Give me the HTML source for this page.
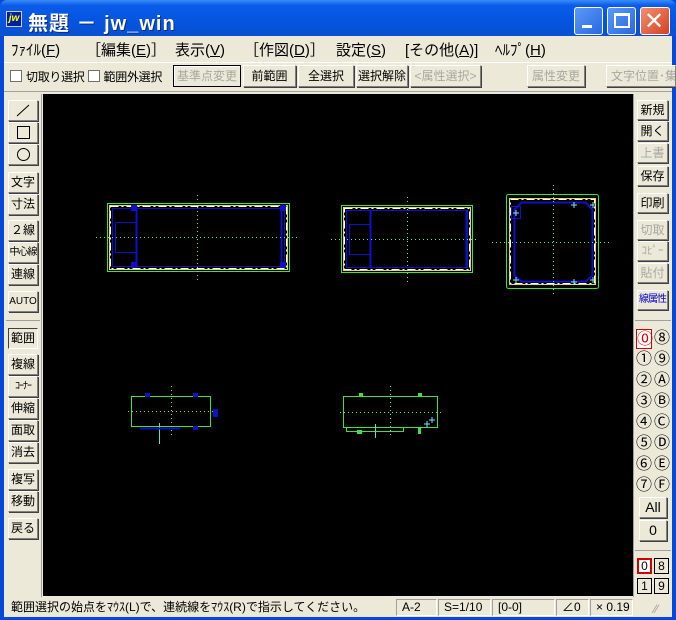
<!DOCTYPE html>
<html><head><meta charset="utf-8"><style>
*{margin:0;padding:0;box-sizing:border-box}
body{width:676px;height:620px;overflow:hidden;background:#0848d8;font-family:"Liberation Sans","Noto Sans CJK JP",sans-serif;position:relative}
.a{position:absolute}
#title{left:0;top:0;width:676px;height:36px;background:linear-gradient(#3a8cf8 0%,#0a5ce8 15%,#0554e0 60%,#0a50d0 100%);border-radius:7px 7px 0 0}
#frame{left:4px;top:36px;width:668px;height:581px;background:#ece9d8}
.btn{position:absolute;background:#ece9d8;border:1px solid;border-color:#fff #808080 #808080 #fff;box-shadow:1px 1px 0 #404040;font-size:12px;text-align:center;color:#000;white-space:nowrap;overflow:hidden}
.dis{color:#a8a8a0}
.wb{position:absolute;top:7px;width:29px;height:28px;border:1px solid #fff;border-radius:3px;background:linear-gradient(135deg,#5a9af8,#2a68e0)}
.sf{position:absolute;top:599px;height:17px;border:1px solid;border-color:#a0a0a0 #fff #fff #a0a0a0;font-size:12px;line-height:15px;padding-left:5px}
.cb{display:inline-block;width:12px;height:12px;border:1px solid #707070;background:#fff;vertical-align:-1px;margin-right:4px}
.m{position:absolute;top:39px;font-size:15px;white-space:pre;color:#000}
.ly{position:absolute;width:16px;height:20px;font-size:16px;line-height:20px;text-align:center;color:#000}
</style></head><body>
<div id="title" class="a"></div>
<div class="a" style="left:6px;top:11px;width:16px;height:16px;background:#0020a0;border:1px solid #ccc;color:#ff0;font:bold italic 10px 'Liberation Sans';line-height:14px;text-align:center">jw</div>
<div class="a" style="left:28px;top:7px;color:#fff;font-size:20px;font-weight:bold;text-shadow:1px 1px 0 #0a2a80;letter-spacing:1px">無題 － jw_win</div>
<div class="wb" style="left:574px"><div class="a" style="left:7px;top:17px;width:10px;height:3px;background:#fff"></div></div>
<div class="wb" style="left:607px"><div class="a" style="left:6px;top:5px;width:16px;height:15px;border:2px solid #fff;border-top-width:3px"></div></div>
<div class="wb" style="left:640px;width:30px;background:linear-gradient(135deg,#f09070,#d84020)"><div class="a" style="left:3px;top:-1px;color:#fff;font:bold 24px 'DejaVu Sans'">✕</div></div>
<div id="frame" class="a"></div>
<div class="m" style="left:11px">ﾌｧｲﾙ(<u>F</u>)</div>
<div class="m" style="left:86px">［編集(<u>E</u>)］</div>
<div class="m" style="left:175px">表示(<u>V</u>)</div>
<div class="m" style="left:244px">［作図(<u>D</u>)］</div>
<div class="m" style="left:336px">設定(<u>S</u>)</div>
<div class="m" style="left:405px">[その他(<u>A</u>)]</div>
<div class="m" style="left:495px">ﾍﾙﾌﾟ(<u>H</u>)</div>
<div class="a" style="left:4px;top:62px;width:668px;height:1px;background:#fff"></div>
<div class="a" style="left:10px;top:68px;font-size:12px;white-space:pre;letter-spacing:-0.3px"><span class="cb"></span>切取り選択 <span class="cb"></span>範囲外選択</div>
<div class="btn dis" style="left:173px;top:65px;width:68px;height:22px;line-height:20px;border:1px solid #000;box-shadow:inset 1px 1px 0 #fff">基準点変更</div>
<div class="btn" style="left:243px;top:65px;width:53px;height:22px;line-height:20px">前範囲</div>
<div class="btn" style="left:298px;top:65px;width:56px;height:22px;line-height:20px">全選択</div>
<div class="btn" style="left:356px;top:65px;width:52px;height:22px;line-height:20px">選択解除</div>
<div class="btn dis" style="left:410px;top:65px;width:71px;height:22px;line-height:20px">&lt;属性選択&gt;</div>
<div class="btn dis" style="left:527px;top:65px;width:58px;height:22px;line-height:20px">属性変更</div>
<div class="btn dis" style="left:606px;top:65px;width:70px;height:22px;line-height:20px;text-align:left;padding-left:4px">文字位置･集</div>
<div class="a" style="left:4px;top:91px;width:668px;height:1px;background:#a0a0a0"></div>
<div class="a" style="left:41px;top:94px;width:1px;height:503px;background:#a0a0a0"></div>
<svg class="a" style="left:43px;top:94px" width="590" height="502" viewBox="43 94 590 502">
<rect x="43" y="94" width="590" height="502" fill="#000"/>
<g fill="none" stroke-width="1">
<rect x="107.5" y="203.5" width="182" height="68" stroke="#40e040"/>
<rect x="109.5" y="205.5" width="178" height="64" stroke="#e0e040"/>
<rect x="110.5" y="206.5" width="176" height="62" stroke="#fff" stroke-dasharray="8,3,2,3"/>
<rect x="112.5" y="208.5" width="172" height="58" stroke="#1010c8"/>
<line x1="136.5" y1="208" x2="136.5" y2="267" stroke="#1010c8" stroke-width="2"/>
<line x1="281.5" y1="208" x2="281.5" y2="267" stroke="#1010c8" stroke-width="2"/>
<rect x="115.5" y="222.5" width="21" height="30" stroke="#1010c8"/>
<line x1="197.5" y1="195" x2="197.5" y2="280" stroke="#60e0c0" stroke-dasharray="1,3"/>
<line x1="96" y1="237.5" x2="300" y2="237.5" stroke="#60e0c0" stroke-dasharray="1,3"/>
<rect x="341.5" y="205.5" width="131" height="67" stroke="#40e040"/>
<rect x="343.5" y="207.5" width="127" height="63" stroke="#e0e040"/>
<rect x="344.5" y="208.5" width="125" height="61" stroke="#fff" stroke-dasharray="8,3,2,3"/>
<rect x="346.5" y="210.5" width="121" height="57" stroke="#1010c8"/>
<line x1="370.5" y1="210" x2="370.5" y2="268" stroke="#1010c8" stroke-width="2"/>
<line x1="466.5" y1="210" x2="466.5" y2="268" stroke="#1010c8" stroke-width="2"/>
<rect x="349.5" y="224.5" width="21" height="30" stroke="#1010c8"/>
<line x1="407.5" y1="197" x2="407.5" y2="282" stroke="#60e0c0" stroke-dasharray="1,3"/>
<line x1="331" y1="239.5" x2="478" y2="239.5" stroke="#60e0c0" stroke-dasharray="1,3"/>
<rect x="506.5" y="194.5" width="92" height="94" rx="2" stroke="#40e040"/>
<rect x="509.5" y="198.5" width="86" height="86" stroke="#e0e040"/>
<rect x="510.5" y="199.5" width="84" height="84" stroke="#fff" stroke-dasharray="8,3,2,3"/>
<path d="M521.5 202.5H585.5L592.5 209.5V275.5L585.5 281.5H521.5L514.5 275.5V209.5Z" stroke="#1010c8" stroke-width="2"/>
<rect x="511.5" y="206.5" width="9" height="12" stroke="#1010c8"/>
<line x1="553.5" y1="185" x2="553.5" y2="295" stroke="#60e0c0" stroke-dasharray="1,3"/>
<line x1="492" y1="242.5" x2="612" y2="242.5" stroke="#60e0c0" stroke-dasharray="1,3"/>
<rect x="131.5" y="396.5" width="79" height="30" stroke="#40e040"/>
<line x1="171.5" y1="386" x2="171.5" y2="438" stroke="#60e0c0" stroke-dasharray="1,3"/>
<line x1="128" y1="411.5" x2="218" y2="411.5" stroke="#60e0c0" stroke-dasharray="1,3"/>
<line x1="159.5" y1="423" x2="159.5" y2="444" stroke="#60e0c0"/>
<line x1="140" y1="428.5" x2="180" y2="428.5" stroke="#1010c8" stroke-width="2"/>
<rect x="343.5" y="396.5" width="94" height="31" stroke="#40e040"/>
<path d="M346.5 428V431.5H403.5V428" stroke="#40e040"/>
<line x1="390.5" y1="386" x2="390.5" y2="436" stroke="#60e0c0" stroke-dasharray="1,3"/>
<line x1="340" y1="412.5" x2="442" y2="412.5" stroke="#60e0c0" stroke-dasharray="1,3"/>
<line x1="375.5" y1="424" x2="375.5" y2="438" stroke="#60e0c0"/>
</g>
<g fill="#1010c8"><rect x="145" y="393" width="5" height="4"/><rect x="193" y="393" width="5" height="4"/><rect x="193" y="426" width="5" height="4"/><rect x="213" y="409" width="5" height="8"/>
<rect x="131" y="205" width="6" height="6"/><rect x="131" y="262" width="6" height="6"/><rect x="280" y="205" width="6" height="6"/><rect x="280" y="262" width="6" height="6"/></g>
<g fill="#40e040"><rect x="359" y="393" width="4" height="4"/><rect x="418" y="393" width="4" height="4"/><rect x="357" y="430" width="5" height="4"/><rect x="418" y="428" width="3" height="6"/></g>
<g stroke="#80e0ff" stroke-width="1"><path d="M424 424h6M427 421v6M429 420h6M432 417v6"/><path d="M513 213h6M516 210v6M571 205h6M574 202v6M590 205h6M593 202v6M513 280h6M516 277v6M571 282h6M574 279v6M590 280h6M593 277v6"/></g>
</svg>
<div class="a" style="left:633px;top:94px;width:1px;height:503px;background:#a0a0a0"></div>
<div class="btn" style="left:8px;top:100px;width:30px;height:21px"><svg width="28" height="19"><line x1="8" y1="15" x2="20" y2="4" stroke="#000"/></svg></div>
<div class="btn" style="left:8px;top:122px;width:30px;height:21px"><div class="a" style="left:8px;top:3px;width:13px;height:13px;border:1px solid #000"></div></div>
<div class="btn" style="left:8px;top:144px;width:30px;height:21px"><div class="a" style="left:8px;top:3px;width:13px;height:13px;border:1px solid #000;border-radius:50%"></div></div>
<div class="btn" style="left:8px;top:172px;width:30px;height:21px;line-height:19px">文字</div>
<div class="btn" style="left:8px;top:194px;width:30px;height:21px;line-height:19px">寸法</div>
<div class="btn" style="left:8px;top:220px;width:30px;height:21px;line-height:19px">２線</div>
<div class="btn" style="left:8px;top:242px;width:30px;height:21px;line-height:19px;font-size:10px;letter-spacing:-1px">中心線</div>
<div class="btn" style="left:8px;top:264px;width:30px;height:21px;line-height:19px">連線</div>
<div class="btn" style="left:8px;top:291px;width:30px;height:21px;line-height:19px;font-size:10px">AUTO</div>
<div class="a" style="left:6px;top:320px;width:34px;height:1px;background:#a0a0a0"></div>
<div class="btn" style="left:8px;top:328px;width:30px;height:21px;line-height:19px;border-color:#404040 #fff #fff #404040;box-shadow:none">範囲</div>
<div class="btn" style="left:8px;top:354px;width:30px;height:21px;line-height:19px">複線</div>
<div class="btn" style="left:8px;top:376px;width:30px;height:21px;line-height:19px;font-size:10px;letter-spacing:-1px">ｺｰﾅｰ</div>
<div class="btn" style="left:8px;top:398px;width:30px;height:21px;line-height:19px">伸縮</div>
<div class="btn" style="left:8px;top:420px;width:30px;height:21px;line-height:19px">面取</div>
<div class="btn" style="left:8px;top:442px;width:30px;height:21px;line-height:19px">消去</div>
<div class="btn" style="left:8px;top:469px;width:30px;height:21px;line-height:19px">複写</div>
<div class="btn" style="left:8px;top:491px;width:30px;height:21px;line-height:19px">移動</div>
<div class="btn" style="left:8px;top:518px;width:30px;height:21px;line-height:19px">戻る</div>
<div class="btn" style="left:637px;top:100px;width:31px;height:20px;line-height:18px">新規</div>
<div class="btn" style="left:637px;top:121px;width:31px;height:20px;line-height:18px">開く</div>
<div class="btn dis" style="left:637px;top:143px;width:31px;height:20px;line-height:18px">上書</div>
<div class="btn" style="left:637px;top:166px;width:31px;height:20px;line-height:18px">保存</div>
<div class="btn" style="left:637px;top:193px;width:31px;height:20px;line-height:18px">印刷</div>
<div class="btn dis" style="left:637px;top:220px;width:31px;height:20px;line-height:18px">切取</div>
<div class="btn dis" style="left:637px;top:241px;width:31px;height:20px;line-height:18px;font-size:11px">ｺﾋﾟｰ</div>
<div class="btn dis" style="left:637px;top:263px;width:31px;height:20px;line-height:18px">貼付</div>
<div class="btn" style="left:637px;top:290px;width:31px;height:20px;line-height:18px;color:#0000d0;font-size:10px;letter-spacing:-1px">線属性</div>
<div class="a" style="left:635px;top:320px;width:36px;height:1px;background:#a0a0a0"></div>
<div class="ly" style="left:636px;top:329px;color:#d00000;border:1px solid #d00000;background:#fff">⓪</div><div class="ly" style="left:654px;top:329px">⑧</div>
<div class="ly" style="left:636px;top:350px">①</div><div class="ly" style="left:654px;top:350px">⑨</div>
<div class="ly" style="left:636px;top:371px">②</div><div class="ly" style="left:654px;top:371px">Ⓐ</div>
<div class="ly" style="left:636px;top:392px">③</div><div class="ly" style="left:654px;top:392px">Ⓑ</div>
<div class="ly" style="left:636px;top:413px">④</div><div class="ly" style="left:654px;top:413px">Ⓒ</div>
<div class="ly" style="left:636px;top:434px">⑤</div><div class="ly" style="left:654px;top:434px">Ⓓ</div>
<div class="ly" style="left:636px;top:455px">⑥</div><div class="ly" style="left:654px;top:455px">Ⓔ</div>
<div class="ly" style="left:636px;top:476px">⑦</div><div class="ly" style="left:654px;top:476px">Ⓕ</div>
<div class="btn" style="left:639px;top:497px;width:28px;height:21px;line-height:19px;font-size:14px">All</div>
<div class="btn" style="left:639px;top:520px;width:28px;height:21px;line-height:19px;font-size:14px">0</div>
<div class="a" style="left:635px;top:550px;width:36px;height:1px;background:#a0a0a0"></div>
<div class="a" style="left:637px;top:558px;width:15px;height:16px;border:2px solid #d00000;font-size:12px;text-align:center;line-height:12px;background:#fff">0</div>
<div class="a" style="left:654px;top:558px;width:15px;height:16px;border:1px solid #000;font-size:12px;text-align:center;line-height:14px">8</div>
<div class="a" style="left:637px;top:578px;width:15px;height:16px;border:1px solid #000;font-size:12px;text-align:center;line-height:14px">1</div>
<div class="a" style="left:654px;top:578px;width:15px;height:16px;border:1px solid #000;font-size:12px;text-align:center;line-height:14px">9</div>
<div class="sf" style="left:5px;width:392px;border-color:transparent">範囲選択の始点をﾏｳｽ(L)で、連続線をﾏｳｽ(R)で指示してください。</div>
<div class="sf" style="left:396px;width:41px">A-2</div>
<div class="sf" style="left:438px;width:53px">S=1/10</div>
<div class="sf" style="left:492px;width:63px">[0-0]</div>
<div class="sf" style="left:556px;width:33px">∠0</div>
<div class="sf" style="left:590px;width:43px">× 0.19</div>
<div class="a" style="left:654px;top:602px;font-size:12px;color:#a0a0a0">⁄⁄</div>
</body></html>
